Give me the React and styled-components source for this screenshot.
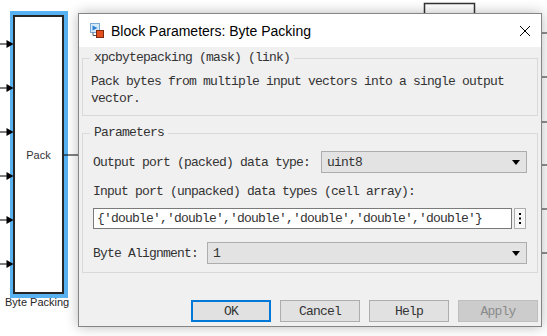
import React from 'react';
import styled, {createGlobalStyle} from 'styled-components';

const MONO = `"Liberation Mono", "DejaVu Sans Mono", monospace`;
const SANS = `"Liberation Sans", Arial, sans-serif`;

const GlobalStyle = createGlobalStyle`
    html, body {
        margin: 0;
        padding: 0;
        background: #ffffff;
    }
`;

/* simulink canvas behind the dialog */
const Canvas = styled.div`
    position: relative;
    width: 547px;
    height: 336px;
    overflow: hidden;
    background: #ffffff;
    font-family: ${SANS};
`;

const Wires = styled.svg`
    position: absolute;
    left: 0;
    top: 0;
`;

const SelectedBlock = styled.div`
    position: absolute;
    left: 10px;
    top: 11px;
    width: 58px;
    height: 287px;
    box-sizing: border-box;
    border-style: solid;
    border-color: #58b1f0;
    border-width: 4px 4px 4px 3px;
    display: flex;
`;

const BlockBody = styled.div`
    flex: 1;
    background: #ffffff;
    border: 2px solid #262626;
    display: flex;
    align-items: center;
    justify-content: center;
    font-size: 11px;
    color: #333;
`;

const BlockLabel = styled.div`
    position: absolute;
    left: 5px;
    top: 296px;
    font-size: 11px;
    color: #262626;
`;

/* dialog window */
const Dialog = styled.div`
    position: absolute;
    left: 78px;
    top: 13px;
    width: 464px;
    height: 314px;
    box-sizing: border-box;
    border: 1px solid #858585;
    background: #f0f0f0;
    display: flex;
    flex-direction: column;
    box-shadow: 0 0 12px rgba(0, 0, 0, 0.28);
`;

const TitleBar = styled.div`
    height: 33px;
    flex-shrink: 0;
    background: #ffffff;
    display: flex;
    align-items: center;
    padding-left: 11px;
    padding-right: 11px;
`;

const Title = styled.div`
    margin-left: 7px;
    font-family: ${SANS};
    font-size: 14px;
    color: #000;
`;

const CloseIcon = styled.svg`
    margin-left: auto;
`;

const Body = styled.div`
    flex: 1;
    display: flex;
    flex-direction: column;
    padding: 0 3px;
    font-family: ${MONO};
    font-size: 13px;
    letter-spacing: -0.8px;
    color: #333333;
`;

const Group = styled.fieldset`
    margin: ${p => p.$mt}px 0 0;
    padding: ${p => p.$pt}px 10px 8px ${p => p.$pl}px;
    border: 1px solid #d9d9d9;
    min-width: 0;
`;

const Legend = styled.legend`
    padding: 0 4px;
    margin-left: ${p => p.$ml}px;
    line-height: 16px;
`;

const Description = styled.div`
    line-height: 17px;
`;

const Row = styled.div`
    display: flex;
    align-items: center;
    gap: ${p => p.$gap || 0}px;
    margin-top: ${p => p.$mt || 0}px;
`;

const Label = styled.span`
    line-height: 17px;
    white-space: nowrap;
`;

const Select = styled.div`
    flex: 1;
    height: 22px;
    box-sizing: border-box;
    border: 1px solid #adadad;
    background: #e3e3e3;
    display: flex;
    align-items: center;
    padding: 0 6px 0 5px;
`;

const SelectValue = styled.span`
    flex: 1;
`;

const TextField = styled.div`
    flex: 1;
    height: 21px;
    box-sizing: border-box;
    border: 1px solid #7a7a7a;
    background: #ffffff;
    display: flex;
    align-items: center;
    padding-left: 3px;
    white-space: nowrap;
    overflow: hidden;
`;

const MoreButton = styled.div`
    width: 12px;
    height: 21px;
    box-sizing: border-box;
    margin-right: 1px;
    border: 1px solid #adadad;
    background: #f7f7f7;
    display: flex;
    align-items: center;
    justify-content: center;
`;

const ButtonBar = styled.div`
    display: flex;
    justify-content: flex-end;
    gap: 9px;
    margin-top: 27px;
`;

const Button = styled.div`
    width: 80px;
    height: 22px;
    box-sizing: border-box;
    display: flex;
    align-items: center;
    justify-content: center;
    background: ${p => p.$disabled ? '#cccccc' : '#e1e1e1'};
    border: ${p => p.$primary ? '2px solid #0078d7' : p.$disabled ? '1px solid #bfbfbf' : '1px solid #adadad'};
    color: ${p => p.$disabled ? '#8a8a8a' : '#333333'};
`;

const Arrow = () => (
    <svg width="8" height="5" viewBox="0 0 8 5">
        <path d="M0 0H8L4 5Z" fill="#000" />
    </svg>
);

const DialogIcon = () => (
    <svg width="14" height="15" viewBox="0 0 14 15">
        <rect x="0.5" y="0.5" width="9" height="9" fill="#d6ebfa" stroke="#7aa9d6" />
        <path d="M2.5 2.5L7.5 5L2.5 7.5Z" fill="#2b7fd0" />
        <path d="M3 9.5V12.5H6.5" stroke="#555" fill="none" />
        <rect x="6.5" y="7.5" width="7" height="7" fill="#e4511f" stroke="#7d2a0e" />
    </svg>
);

const inputs = [44, 88, 132, 176, 220, 264];
const stubs = [33, 77, 122, 165, 209, 253];

const App = () => {
    return (
        <>
            <GlobalStyle />
            <Canvas>
                <SelectedBlock>
                    <BlockBody>Pack</BlockBody>
                </SelectedBlock>
                <BlockLabel>Byte Packing</BlockLabel>

                <Wires width="547" height="336">
                    {inputs.map(y => (
                        <g key={y}>
                            <line x1="0" y1={y} x2="8" y2={y} stroke="#000" strokeWidth="1" />
                            <path d={`M6.5 ${y - 4}L13.5 ${y}L6.5 ${y + 4}Z`} fill="#000" />
                        </g>
                    ))}
                    <line x1="64" y1="155" x2="90" y2="155" stroke="#000" strokeWidth="1" />
                    <rect x="424.5" y="3.5" width="50" height="30" fill="#fff" stroke="#333" strokeWidth="1.5" />
                    {stubs.map(y => (
                        <line key={y} x1="520" y1={y} x2="547" y2={y} stroke="#222" strokeWidth="1" />
                    ))}
                </Wires>

                <Dialog>
                    <TitleBar>
                        <DialogIcon />
                        <Title>Block Parameters: Byte Packing</Title>
                        <CloseIcon width="10" height="10" viewBox="0 0 10 10">
                            <path d="M0 0L10 10M10 0L0 10" stroke="#000" strokeWidth="1" />
                        </CloseIcon>
                    </TitleBar>
                    <Body>
                        <Group $mt={3} $pt={7} $pl={8}>
                            <Legend $ml={-1}>xpcbytepacking (mask) (link)</Legend>
                            <Description>
                                Pack bytes from multiple input vectors into a single output vector.
                            </Description>
                        </Group>

                        <Group $mt={9} $pt={10} $pl={10}>
                            <Legend $ml={-3}>Parameters</Legend>
                            <Row $gap={11}>
                                <Label>Output port (packed) data type:</Label>
                                <Select>
                                    <SelectValue>uint8</SelectValue>
                                    <Arrow />
                                </Select>
                            </Row>
                            <Row $mt={10}>
                                <Label>Input port (unpacked) data types (cell array):</Label>
                            </Row>
                            <Row $mt={8} $gap={2}>
                                <TextField>{"{'double','double','double','double','double','double'}"}</TextField>
                                <MoreButton>
                                    <svg width="2" height="11" viewBox="0 0 2 11">
                                        <rect x="0" y="0" width="2" height="2" fill="#000" />
                                        <rect x="0" y="4.5" width="2" height="2" fill="#000" />
                                        <rect x="0" y="9" width="2" height="2" fill="#000" />
                                    </svg>
                                </MoreButton>
                            </Row>
                            <Row $mt={13} $gap={9}>
                                <Label>Byte Alignment:</Label>
                                <Select>
                                    <SelectValue>1</SelectValue>
                                    <Arrow />
                                </Select>
                            </Row>
                        </Group>

                        <ButtonBar>
                            <Button $primary>OK</Button>
                            <Button>Cancel</Button>
                            <Button>Help</Button>
                            <Button $disabled>Apply</Button>
                        </ButtonBar>
                    </Body>
                </Dialog>
            </Canvas>
        </>
    );
};

export default App;
